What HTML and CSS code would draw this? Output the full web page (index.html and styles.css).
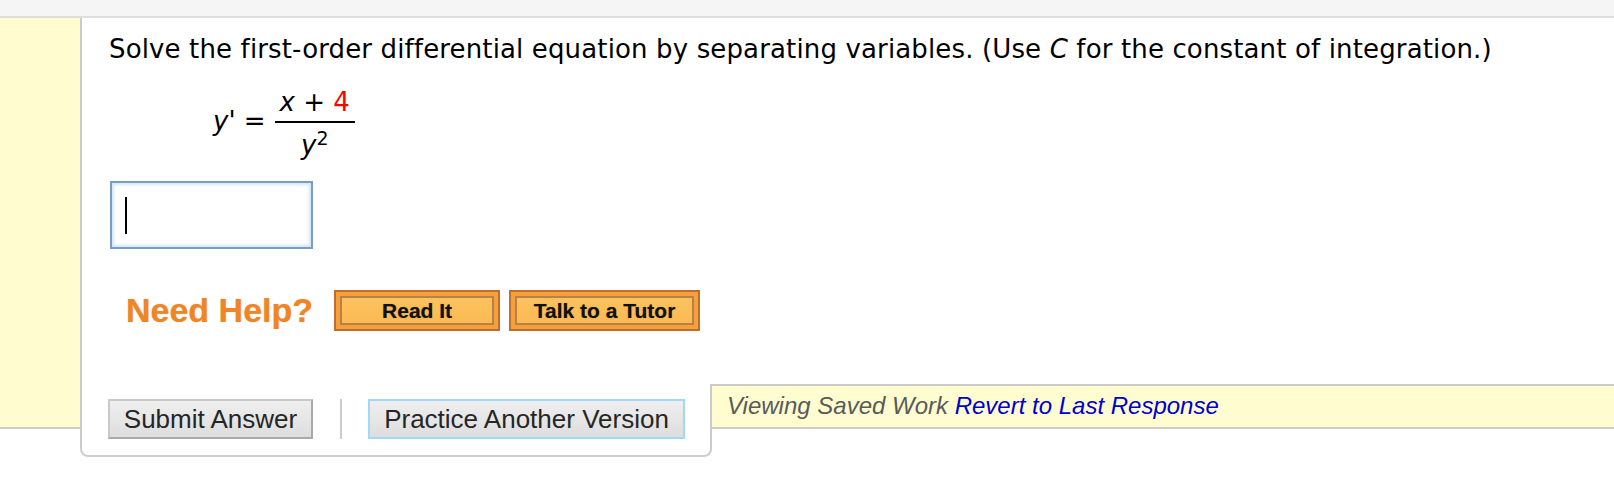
FILE: index.html
```html
<!DOCTYPE html>
<html>
<head>
<meta charset="utf-8">
<link rel="stylesheet" href="styles.css">
</head>
<body>
<div class="topbar"></div>
<div class="question">
  <div class="gutter"></div>
  <div class="main">
    <div class="content">
      <p class="prompt">Solve the first-order differential equation by separating variables. (Use <i>C</i> for the constant of integration.)</p>
      <div class="equation">
        <span class="lhs"><i>y'</i> =</span>
        <span class="frac">
          <span class="num"><i>x</i> + <span class="red">4</span></span>
          <span class="den"><i>y</i><sup>2</sup></span>
        </span>
      </div>
      <div class="answer"><span class="caret"></span></div>
      <div class="help">
        <span class="help-label">Need Help?</span>
        <button class="help-btn read">Read It</button>
        <button class="help-btn tutor">Talk to a Tutor</button>
      </div>
    </div>
    <div class="footer">
      <div class="card-foot">
        <button class="btn submit">Submit Answer</button>
        <span class="sep"></span>
        <button class="btn practice">Practice Another Version</button>
      </div>
      <div class="saved"><span class="saved-label">Viewing Saved Work</span> <span class="revert">Revert to Last Response</span></div>
    </div>
  </div>
</div>
</body>
</html>
```
FILE: styles.css
```css
html, body {
  margin: 0;
  padding: 0;
  background: #fff;
}
body {
  font-family: "DejaVu Sans", Verdana, sans-serif;
  color: #000;
}
.topbar {
  height: 16px;
  background: #f5f5f5;
  border-bottom: 2px solid #dedede;
}
.question {
  display: flex;
  align-items: flex-start;
}
.gutter {
  width: 80px;
  height: 409px;
  flex: none;
  background: #fffdd0;
  border-right: 2px solid #cccccc;
  border-bottom: 2px solid #cccccc;
}
.main {
  flex: 1;
  display: flex;
  flex-direction: column;
}
.content {
  padding: 16px 0 53px 27px;
}
.prompt {
  margin: 0;
  font-size: 26px;
  line-height: 30px;
  letter-spacing: 0.14px;
  white-space: nowrap;
}
.equation {
  margin: 25px 0 0 104px;
  display: flex;
  align-items: flex-start;
  font-size: 26px;
}
.lhs {
  line-height: 26px;
  margin-top: 19px;
  margin-right: 9px;
}
.frac {
  display: flex;
  flex-direction: column;
  align-items: stretch;
  text-align: center;
}
.num {
  line-height: 26px;
  padding: 0 5px 6px;
  border-bottom: 2px solid #000;
}
.red { color: #ff0000; }
.den {
  line-height: 26px;
  padding-top: 9px;
}
.den sup {
  font-size: 19px;
  line-height: 0;
  vertical-align: 9px;
}
.answer {
  margin: 23px 0 0 1px;
  height: 64px;
  width: 186px;
  border: 2px solid #7a9dc5;
  box-shadow: inset 0 0 3px 2px #d4e6fa;
  background: #fff;
  display: flex;
  align-items: center;
  padding-left: 13px;
}
.caret {
  width: 2px;
  height: 37px;
  background: #000;
}
.help {
  margin: 41px 0 0 17px;
  display: flex;
  align-items: center;
  height: 41px;
}
.help-label {
  font-family: "Liberation Sans", Arial, sans-serif;
  font-weight: bold;
  font-size: 34px;
  color: #ef8527;
  margin-right: 21px;
  text-shadow: 0 0 1px rgba(239,133,39,0.6);
}
.help-btn {
  height: 41px;
  border: 2px solid #c06e2c;
  background: linear-gradient(#fcc462, #fbb84f);
  box-shadow: inset 0 0 0 4px #f59f3d, inset 0 0 0 6px #b88149;
  font-family: "Liberation Sans", Arial, sans-serif;
  font-weight: bold;
  font-size: 21px;
  color: #111;
  padding: 0;
  text-shadow: 0 0 1px rgba(0,0,0,0.4);
}
.read { width: 166px; margin-right: 9px; }
.tutor { width: 191px; }
.footer {
  display: flex;
  align-items: flex-start;
}
.card-foot {
  margin-left: -2px;
  padding: 15px 25px 16px 26px;
  background: #fff;
  border: 2px solid #cccccc;
  border-top: 0;
  border-radius: 0 0 8px 8px;
  display: flex;
  align-items: center;
  flex: none;
}
.btn {
  height: 40px;
  padding: 0;
  font-family: "Liberation Sans", Arial, sans-serif;
  font-size: 26px;
  color: #262626;
  background: linear-gradient(#efefef, #dddddd);
  border: 2px solid #c9c9c9;
}
.submit {
  width: 205px;
  border-right-color: #a9a9a9;
  border-bottom-color: #a9a9a9;
}
.sep {
  width: 2px;
  height: 40px;
  background: #cccccc;
  margin: 0 26px 0 27px;
}
.practice {
  width: 317px;
  border-color: #a2d7f7;
}
.saved {
  flex: 1;
  height: 45px;
  box-sizing: border-box;
  border-top: 2px solid #cccccc;
  border-bottom: 2px solid #cccccc;
  background: #fffdd0;
  font-family: "Liberation Sans", Arial, sans-serif;
  font-style: italic;
  font-size: 24px;
  line-height: 24px;
  padding: 8px 0 0 15px;
  white-space: nowrap;
}
.saved-label { color: #5a5a5a; }
.revert { color: #0000cc; }
```
